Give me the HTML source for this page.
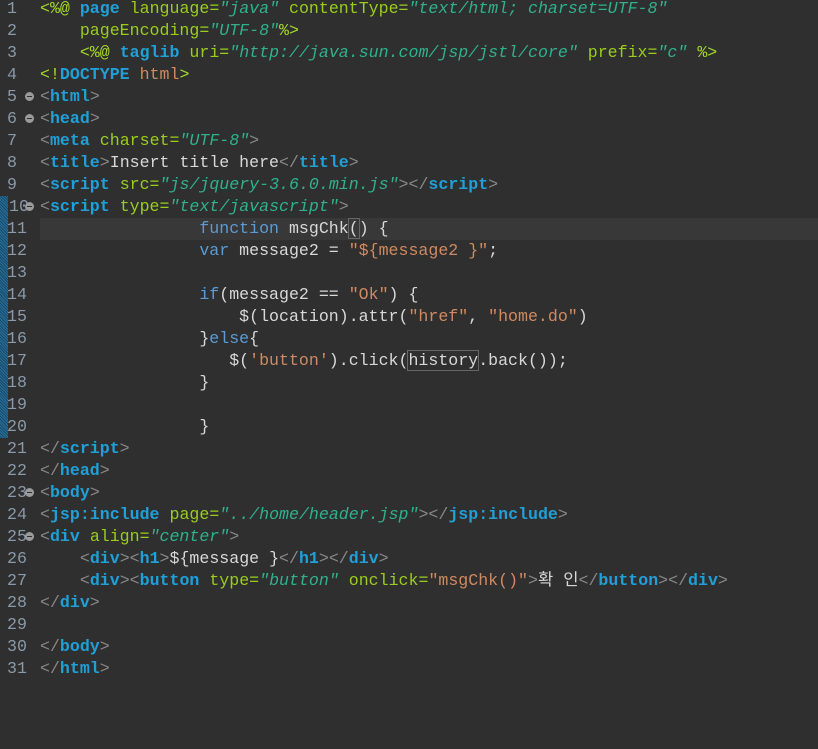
<!DOCTYPE html>
<html><head><meta charset="utf-8"><style>
html,body{margin:0;padding:0;background:#2f2f2f;width:818px;height:749px;overflow:hidden}
#g{position:absolute;left:0;top:196px;width:8px;height:242px;background:#1d5a80;background-image:repeating-linear-gradient(45deg,#2a6f99 0 1px,#174a69 1px 2px)}
#hl{position:absolute;left:40px;top:218px;width:778px;height:22px;background:#383838}
.c{position:absolute;left:0;top:-2px;font-family:"Liberation Mono","Noto Sans CJK KR",monospace;font-size:16.6px;line-height:22px;color:#d8d8d8}
.l{height:22px;position:relative;white-space:pre}
.n{display:inline-block;width:40px;color:#8a9aaa;padding-left:7px;box-sizing:border-box}
.f{position:absolute;left:25px;top:6px;width:9px;height:9px;border-radius:50%;background:#9a9a9a}
.f:after{content:"";position:absolute;left:2px;top:4px;width:5px;height:1px;background:#2f2f2f}
.b{color:#888}.t{color:#1fa0d8;font-weight:bold}.a{color:#9acd1e}.v{color:#2fb28c;font-style:italic}
.k{color:#5b9bd5}.s{color:#d08a60}.d{color:#a6d82a}
.box{outline:1px solid #666}
</style></head><body>
<div id="g"></div><div id="hl"></div>
<div class="c">
<div class="l"><span class="n">1</span><span class="d">&lt;%@</span> <span class="t">page</span> <span class="a">language=</span><span class="v">"java"</span> <span class="a">contentType=</span><span class="v">"text/html; charset=UTF-8"</span></div>
<div class="l"><span class="n">2</span>    <span class="a">pageEncoding=</span><span class="v">"UTF-8"</span><span class="d">%&gt;</span></div>
<div class="l"><span class="n">3</span>    <span class="d">&lt;%@</span> <span class="t">taglib</span> <span class="a">uri=</span><span class="v">"http://java.sun.com/jsp/jstl/core"</span> <span class="a">prefix=</span><span class="v">"c"</span> <span class="d">%&gt;</span></div>
<div class="l"><span class="n">4</span><span class="d">&lt;!</span><span class="t">DOCTYPE</span> <span class="s">html</span><span class="d">&gt;</span></div>
<div class="l"><span class="n">5</span><i class="f"></i><span class="b">&lt;</span><span class="t">html</span><span class="b">&gt;</span></div>
<div class="l"><span class="n">6</span><i class="f"></i><span class="b">&lt;</span><span class="t">head</span><span class="b">&gt;</span></div>
<div class="l"><span class="n">7</span><span class="b">&lt;</span><span class="t">meta</span> <span class="a">charset=</span><span class="v">"UTF-8"</span><span class="b">&gt;</span></div>
<div class="l"><span class="n">8</span><span class="b">&lt;</span><span class="t">title</span><span class="b">&gt;</span>Insert title here<span class="b">&lt;/</span><span class="t">title</span><span class="b">&gt;</span></div>
<div class="l"><span class="n">9</span><span class="b">&lt;</span><span class="t">script</span> <span class="a">src=</span><span class="v">"js/jquery-3.6.0.min.js"</span><span class="b">&gt;&lt;/</span><span class="t">script</span><span class="b">&gt;</span></div>
<div class="l"><span class="n" style="padding-left:9px">10</span><i class="f"></i><span class="b">&lt;</span><span class="t">script</span> <span class="a">type=</span><span class="v">"text/javascript"</span><span class="b">&gt;</span></div>
<div class="l"><span class="n">11</span>                <span class="k">function</span> msgChk<span class="box">(</span>) {</div>
<div class="l"><span class="n">12</span>                <span class="k">var</span> message2 = <span class="s">"${message2 }"</span>;</div>
<div class="l"><span class="n">13</span></div>
<div class="l"><span class="n">14</span>                <span class="k">if</span>(message2 == <span class="s">"Ok"</span>) {</div>
<div class="l"><span class="n">15</span>                    $(location).attr(<span class="s">"href"</span>, <span class="s">"home.do"</span>)</div>
<div class="l"><span class="n">16</span>                }<span class="k">else</span>{</div>
<div class="l"><span class="n">17</span>                   $(<span class="s">'button'</span>).click(<span class="box">history</span>.back());</div>
<div class="l"><span class="n">18</span>                }</div>
<div class="l"><span class="n">19</span></div>
<div class="l"><span class="n">20</span>                }</div>
<div class="l"><span class="n">21</span><span class="b">&lt;/</span><span class="t">script</span><span class="b">&gt;</span></div>
<div class="l"><span class="n">22</span><span class="b">&lt;/</span><span class="t">head</span><span class="b">&gt;</span></div>
<div class="l"><span class="n">23</span><i class="f"></i><span class="b">&lt;</span><span class="t">body</span><span class="b">&gt;</span></div>
<div class="l"><span class="n">24</span><span class="b">&lt;</span><span class="t">jsp:include</span> <span class="a">page=</span><span class="v">"../home/header.jsp"</span><span class="b">&gt;&lt;/</span><span class="t">jsp:include</span><span class="b">&gt;</span></div>
<div class="l"><span class="n">25</span><i class="f"></i><span class="b">&lt;</span><span class="t">div</span> <span class="a">align=</span><span class="v">"center"</span><span class="b">&gt;</span></div>
<div class="l"><span class="n">26</span>    <span class="b">&lt;</span><span class="t">div</span><span class="b">&gt;&lt;</span><span class="t">h1</span><span class="b">&gt;</span>${message }<span class="b">&lt;/</span><span class="t">h1</span><span class="b">&gt;&lt;/</span><span class="t">div</span><span class="b">&gt;</span></div>
<div class="l"><span class="n">27</span>    <span class="b">&lt;</span><span class="t">div</span><span class="b">&gt;&lt;</span><span class="t">button</span> <span class="a">type=</span><span class="v">"button"</span> <span class="a">onclick=</span><span class="s">"msgChk()"</span><span class="b">&gt;</span>확 인<span class="b">&lt;/</span><span class="t">button</span><span class="b">&gt;&lt;/</span><span class="t">div</span><span class="b">&gt;</span></div>
<div class="l"><span class="n">28</span><span class="b">&lt;/</span><span class="t">div</span><span class="b">&gt;</span></div>
<div class="l"><span class="n">29</span></div>
<div class="l"><span class="n">30</span><span class="b">&lt;/</span><span class="t">body</span><span class="b">&gt;</span></div>
<div class="l"><span class="n">31</span><span class="b">&lt;/</span><span class="t">html</span><span class="b">&gt;</span></div>
</div>
</body></html>
